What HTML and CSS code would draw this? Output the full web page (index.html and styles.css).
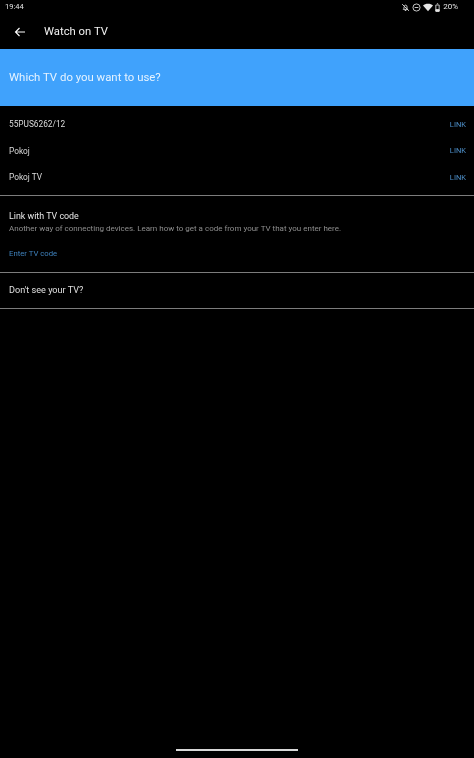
FILE: index.html
```html
<!DOCTYPE html>
<html lang="en">
<head>
<meta charset="utf-8">
<title>Watch on TV</title>
<link rel="stylesheet" href="styles.css">
</head>
<body>
<div class="screen">
  <div class="status">
    <span class="time">19:44</span>
    <div class="status-icons">
      <svg class="si" width="9" height="9" viewBox="0 0 24 24" fill="none" stroke="#ddd" stroke-width="2.4"><path d="M6 17h12l-2-3v-4a4 4 0 0 0-7-3M8 10v4l-2 3M10 20h4" /><path d="M3 3l18 18"/></svg>
      <svg class="si" width="9" height="9" viewBox="0 0 24 24" fill="none" stroke="#ddd" stroke-width="2.4"><circle cx="12" cy="12" r="9.500"/><path d="M7 12h10"/></svg>
      <svg class="si" width="10" height="9" viewBox="0 0 24 20" fill="#e6e6e6"><path d="M12 19L0 5.500C3 2.500 7 1 12 1s9 1.500 12 4.500z"/></svg>
      <svg class="si" width="5" height="9" viewBox="0 0 12 20" fill="none" stroke="#e6e6e6" stroke-width="2"><path d="M2 4h8v15H2zM4.500 1h3"/><path d="M2 15h8v4H2z" fill="#e6e6e6"/></svg>
      <span class="pct">20%</span>
    </div>
  </div>
  <header class="appbar">
    <svg class="back" width="12" height="12" viewBox="0 0 24 24" fill="none" stroke="#fff" stroke-width="2.200"><path d="M22 12H3M11 4l-8 8 8 8"/></svg>
    <h1 class="title">Watch on TV</h1>
  </header>
  <section class="hero">Which TV do you want to use?</section>
  <ul class="devices">
    <li class="device"><span>55PUS6262/12</span><a class="link">LINK</a></li>
    <li class="device"><span>Pokoj</span><a class="link">LINK</a></li>
    <li class="device"><span>Pokoj TV</span><a class="link">LINK</a></li>
  </ul>
  <section class="code">
    <h2 class="code-title">Link with TV code</h2>
    <p class="code-desc">Another way of connecting devices. Learn how to get a code from your TV that you enter here.</p>
    <a class="code-link">Enter TV code</a>
  </section>
  <section class="missing">Don't see your TV?</section>
  <div class="spacer"></div>
  <div class="nav"><div class="handle"></div></div>
</div>
</body>
</html>
```
FILE: styles.css
```css
* { box-sizing: border-box; }
html, body { margin: 0; padding: 0; background: #000; }
.screen {
  width: 474px;
  height: 758px;
  display: flex;
  flex-direction: column;
  background: #000;
  color: #e8e8e8;
  font-family: "Roboto", "Liberation Sans", sans-serif;
  overflow: hidden;
  filter: blur(0.3px);
}
.status {
  height: 12px;
  padding: 0 16px 0 5px;
  display: flex;
  justify-content: space-between;
  align-items: flex-end;
  flex: none;
}
.time { font-size: 7.500px; color: #e6e6e6; line-height: 10px; }
.status-icons { display: flex; align-items: center; gap: 2px; height: 10px; }
.si { display: block; }
.pct { font-size: 8px; color: #e6e6e6; line-height: 10px; margin-left: 1px; }
.appbar {
  height: 37px;
  padding: 2px 0 0 14px;
  display: flex;
  align-items: center;
  gap: 18px;
  flex: none;
}
.back { display: block; }
.title { margin: 0; font-size: 11.300px; font-weight: 400; color: #f2f2f2; }
.hero {
  height: 57px;
  flex: none;
  background: #40a2fc;
  color: #e6f3ff;
  font-size: 11.400px;
  padding: 0 9px 1px;
  display: flex;
  align-items: center;
}
.devices {
  list-style: none;
  margin: 0;
  padding: 5px 0 4px;
  border-bottom: 1px solid #7c7c7c;
  flex: none;
}
.device {
  height: 26.500px;
  padding: 0 8px 0 9px;
  display: flex;
  justify-content: space-between;
  align-items: center;
  font-size: 8.300px;
  color: #dcdcdc;
}
.link { color: #4d8fc9; font-size: 7.500px; }
.code {
  flex: none;
  height: 77px;
  padding: 15px 9px 0;
  border-bottom: 1px solid #7c7c7c;
}
.code-title { margin: 0; font-size: 8.900px; font-weight: 400; line-height: 10px; color: #e8e8e8; }
.code-desc { margin: 3px 0 0; font-size: 8px; line-height: 10px; color: #8e8e8e; white-space: nowrap; }
.code-link { display: block; margin-top: 15px; font-size: 7.750px; line-height: 10px; color: #3f82bd; }
.missing {
  flex: none;
  height: 36px;
  padding: 0 9px;
  display: flex;
  align-items: center;
  border-bottom: 1px solid #7c7c7c;
  font-size: 9.100px;
  color: #e0e0e0;
}
.spacer { flex: 1; }
.nav { flex: none; height: 9px; display: flex; justify-content: center; }
.handle { width: 122px; height: 2px; background: #d8d8d8; }
```
